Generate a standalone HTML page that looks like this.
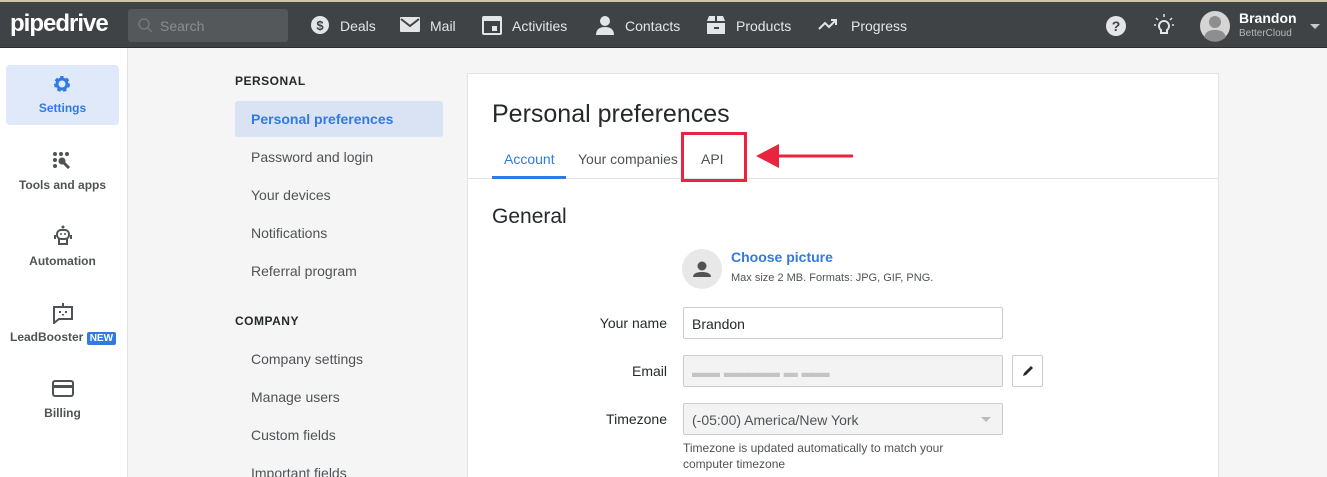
<!DOCTYPE html>
<html style="width:1327px;height:477px;overflow:hidden"><head><meta charset="utf-8"><style>
*{box-sizing:border-box;margin:0;padding:0}
body{width:1327px;height:477px;overflow:hidden;font-family:"Liberation Sans",sans-serif;background:#f5f5f5;position:relative;color:#26292c}
.top{position:absolute;left:0;top:0;width:1327px;height:48px;background:#404346;border-top:2px solid #cfc6a8;border-bottom:1px solid #2a2c2e}
.abs{position:absolute}
.nav{color:#e4e5e6;font-size:14px;top:16px}
.left{position:absolute;left:0;top:48px;width:128px;height:429px;background:#fff;border-right:1px solid #e2e2e2}
.li{position:absolute;left:6px;width:113px;text-align:center;font-size:12px;font-weight:bold;color:#505356}
.sub{position:absolute;left:251px;font-size:14px;color:#4f5256}
.hd{position:absolute;left:235px;font-size:12px;font-weight:bold;color:#26292c;letter-spacing:.5px}
.card{position:absolute;left:467px;top:73px;width:752px;height:404px;background:#fff;border:1px solid #e3e3e3;border-bottom:none;overflow:hidden}
.lbl{position:absolute;font-size:14px;color:#26292c;text-align:right;width:100px;left:567px}
.inp{position:absolute;left:683px;width:320px;height:32px;border:1px solid #ccc;border-radius:2px;font-size:14px;padding:8px}
</style></head><body>
<div class="top">
<div class="abs" style="left:10px;top:8px;color:#fff;font-size:24px;font-weight:bold;letter-spacing:-1px">pipedrive</div>
<div class="abs" style="left:128px;top:7px;width:160px;height:33px;background:#55585b;border-radius:3px"><svg class="abs" style="left:10px;top:9px" width="16" height="16"><circle cx="6" cy="6" r="5" stroke="#777" stroke-width="1.5" fill="none"/><path d="M10 10l4 4" stroke="#777" stroke-width="1.5"/></svg><span class="abs" style="left:32px;top:9px;color:#8a8c8e;font-size:14px">Search</span></div>
<svg class="abs" style="left:310px;top:13px" width="20" height="20"><circle cx="10" cy="10" r="9" fill="#e4e5e6"/><text x="10" y="15" font-size="13" font-weight="bold" text-anchor="middle" fill="#404346" font-family="Liberation Sans">$</text></svg>
<div class="abs nav" style="left:340px">Deals</div>
<svg class="abs" style="left:400px;top:15px" width="20" height="15"><rect width="20" height="15" rx="1" fill="#e4e5e6"/><path d="M1 2l9 7 9-7" stroke="#404346" stroke-width="2" fill="none"/></svg>
<div class="abs nav" style="left:430px">Mail</div>
<svg class="abs" style="left:482px;top:13px" width="20" height="20"><rect x="1" y="2" width="18" height="17" rx="1" fill="none" stroke="#e4e5e6" stroke-width="2"/><rect x="1" y="2" width="18" height="4" fill="#e4e5e6"/><rect x="10" y="11" width="5" height="5" fill="#e4e5e6"/></svg>
<div class="abs nav" style="left:512px">Activities</div>
<svg class="abs" style="left:595px;top:13px" width="20" height="20"><circle cx="10" cy="6" r="5" fill="#e4e5e6"/><path d="M1 20c0-6 4-8 9-8s9 2 9 8z" fill="#e4e5e6"/></svg>
<div class="abs nav" style="left:625px">Contacts</div>
<svg class="abs" style="left:706px;top:13px" width="20" height="20"><path d="M3 1h6v5H1zM11 1h6l2 5h-8z" fill="#e4e5e6"/><rect x="1" y="8" width="18" height="11" fill="#e4e5e6"/><rect x="8" y="12" width="5" height="2" fill="#404346"/></svg>
<div class="abs nav" style="left:736px">Products</div>
<svg class="abs" style="left:818px;top:15px" width="20" height="14"><path d="M1 12l6-6 4 4 7-7M13 3h5v5" stroke="#e4e5e6" stroke-width="2" fill="none"/></svg>
<div class="abs nav" style="left:851px">Progress</div>
<svg class="abs" style="left:1106px;top:14px" width="20" height="20"><circle cx="10" cy="10" r="10" fill="#e4e5e6"/><text x="10" y="15" font-size="14" font-weight="bold" text-anchor="middle" fill="#404346" font-family="Liberation Sans">?</text></svg>
<svg class="abs" style="left:1153px;top:11px" width="22" height="24"><path d="M11 8a5 5 0 0 0-3 9v3h6v-3a5 5 0 0 0-3-9z" fill="none" stroke="#e4e5e6" stroke-width="2"/><path d="M11 1v3M3 5l2 2M19 5l-2 2M1 12h2M19 12h2" stroke="#e4e5e6" stroke-width="1.5"/></svg>
<svg class="abs" style="left:1200px;top:8px" width="30" height="32"><circle cx="15" cy="16" r="15" fill="#d5d5d5"/><circle cx="15" cy="12" r="6" fill="#8e8e8e"/><path d="M4 27c2-6 6-7 11-7s9 1 11 7a15 15 0 0 1-22 0z" fill="#8e8e8e"/></svg>
<div class="abs" style="left:1239px;top:8px;color:#fff;font-size:14px;font-weight:bold">Brandon</div>
<div class="abs" style="left:1239px;top:26px;color:#b4b6b8;font-size:10px">BetterCloud</div>
<div class="abs" style="left:1310px;top:22px;border:5px solid transparent;border-top-color:#c8c9ca"></div>
</div>
<div class="left">
<div class="abs" style="left:6px;top:17px;width:113px;height:60px;background:#dfe9fa;border-radius:4px"></div>
<svg class="abs" style="left:52px;top:26px" width="20" height="20"><circle cx="10" cy="10" r="6" fill="none" stroke="#317ae2" stroke-width="4" stroke-dasharray="3 2.3"/><circle cx="10" cy="10" r="5" fill="none" stroke="#317ae2" stroke-width="3"/></svg>
<div class="li" style="top:53px;color:#317ae2">Settings</div>
<svg class="abs" style="left:52px;top:103px" width="20" height="18"><g fill="#505356"><circle cx="3" cy="3" r="2"/><circle cx="9" cy="3" r="2"/><circle cx="15" cy="3" r="2"/><circle cx="3" cy="9" r="2"/><circle cx="3" cy="15" r="2"/><circle cx="10" cy="10" r="3.5"/></g><path d="M12 12l5 5" stroke="#505356" stroke-width="3"/></svg>
<div class="li" style="top:130px">Tools and apps</div>
<svg class="abs" style="left:53px;top:177px" width="20" height="22"><circle cx="10" cy="2" r="1.5" fill="#505356"/><rect x="4" y="5" width="12" height="9" rx="4" fill="none" stroke="#505356" stroke-width="2"/><circle cx="8" cy="9" r="1" fill="#505356"/><circle cx="12" cy="9" r="1" fill="#505356"/><path d="M6 14v5h8v-5M2 10v4M18 10v4" stroke="#505356" stroke-width="2" fill="none"/></svg>
<div class="li" style="top:206px">Automation</div>
<svg class="abs" style="left:52px;top:254px" width="22" height="22"><path d="M11 1v3" stroke="#505356" stroke-width="2"/><path d="M2 5h18v12H7l-5 4z" fill="none" stroke="#505356" stroke-width="2"/><rect x="7" y="9" width="2" height="2" fill="#505356"/><rect x="13" y="9" width="2" height="2" fill="#505356"/><rect x="10" y="12" width="2" height="1.5" fill="#505356"/></svg>
<div class="li" style="top:282px;left:10px;text-align:left">LeadBooster <span style="background:#317ae2;color:#fff;font-size:10px;padding:1px 3px;border-radius:2px">NEW</span></div>
<svg class="abs" style="left:52px;top:332px" width="22" height="17"><rect x="1" y="1" width="20" height="15" rx="2" fill="none" stroke="#505356" stroke-width="2"/><rect x="1" y="5" width="20" height="3" fill="#505356"/></svg>
<div class="li" style="top:358px">Billing</div>
</div>
<div class="hd" style="top:74px">PERSONAL</div>
<div class="abs" style="left:235px;top:101px;width:208px;height:36px;background:#dae3f3;border-radius:3px"></div>
<div class="sub" style="top:111px;color:#317ae2;font-weight:bold">Personal preferences</div>
<div class="sub" style="top:149px">Password and login</div>
<div class="sub" style="top:187px">Your devices</div>
<div class="sub" style="top:225px">Notifications</div>
<div class="sub" style="top:263px">Referral program</div>
<div class="hd" style="top:314px">COMPANY</div>
<div class="sub" style="top:351px">Company settings</div>
<div class="sub" style="top:389px">Manage users</div>
<div class="sub" style="top:427px">Custom fields</div>
<div class="sub" style="top:465px">Important fields</div>
<div class="card">
<div class="abs" style="left:24px;top:26px;font-size:25px;color:#26292c">Personal preferences</div>
<div class="abs" style="left:0;top:104px;width:750px;height:1px;background:#e3e3e3"></div>
<div class="abs" style="left:36px;top:77px;font-size:14px;color:#317ae2">Account</div>
<div class="abs" style="left:24px;top:102px;width:74px;height:3px;background:#317ae2"></div>
<div class="abs" style="left:110px;top:77px;font-size:14px;color:#505356">Your companies</div>
<div class="abs" style="left:233px;top:77px;font-size:14px;color:#505356">API</div>
<div class="abs" style="left:213px;top:58px;width:66px;height:50px;border:3px solid #e8243e"></div>
<svg class="abs" style="left:287px;top:64px" width="100" height="36"><path d="M98 18H20" stroke="#e8243e" stroke-width="3"/><path d="M1 18l23-12v24z" fill="#e8243e"/></svg>
<div class="abs" style="left:24px;top:131px;font-size:21px;color:#26292c">General</div>
<svg class="abs" style="left:214px;top:175px" width="40" height="40"><circle cx="20" cy="20" r="20" fill="#e8e8e8"/><circle cx="20" cy="17" r="4.5" fill="#505356"/><path d="M11 28c0-4 5-5 9-5s9 1 9 5z" fill="#505356"/></svg>
<div class="abs" style="left:263px;top:175px;font-size:14px;font-weight:bold;color:#317ae2">Choose picture</div>
<div class="abs" style="left:263px;top:198px;font-size:11px;color:#505356">Max size 2 MB. Formats: JPG, GIF, PNG.</div>
</div>
<div class="lbl" style="top:315px">Your name</div>
<div class="inp" style="top:307px;background:#fff">Brandon</div>
<div class="lbl" style="top:363px">Email</div>
<div class="inp" style="top:355px;background:#f3f3f3;color:#c4c4c4">▬▬ ▬▬▬▬ ▬ ▬▬</div>
<div class="abs" style="left:1012px;top:355px;width:31px;height:32px;border:1px solid #ccc;border-radius:2px;background:#fff"><svg class="abs" style="left:8px;top:8px" width="14" height="14"><path d="M2 12l1-3 7-7 2 2-7 7z" fill="#26292c"/></svg></div>
<div class="lbl" style="top:411px">Timezone</div>
<div class="inp" style="top:403px;background:#f3f3f3;color:#505356">(-05:00) America/New York</div>
<div class="abs" style="left:981px;top:417px;border:5px solid transparent;border-top-color:#bbb"></div>
<div class="abs" style="left:683px;top:440px;font-size:12px;color:#505356;line-height:16px;width:300px">Timezone is updated automatically to match your computer timezone</div>
</body></html>
